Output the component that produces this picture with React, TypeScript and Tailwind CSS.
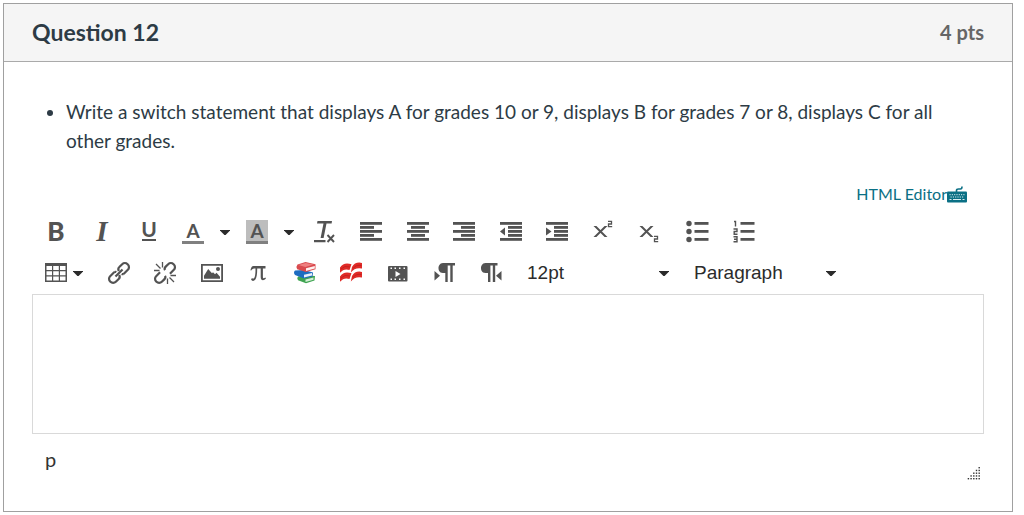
import { useState } from "react";
import type { ReactNode } from "react";

const INK = "#535353";

function Icon({ children }: { children: ReactNode }) {
  return (
    <svg width="22" height="22" viewBox="0 0 22 22" fill={INK} stroke="none" className="shrink-0 overflow-visible" aria-hidden="true">
      {children}
    </svg>
  );
}

function ToolButton({ label, children }: { label: string; children: ReactNode }) {
  return (
    <button type="button" aria-label={label} title={label} className="flex h-10 w-[46px] shrink-0 items-center justify-center">
      <Icon>{children}</Icon>
    </button>
  );
}

function Caret() {
  return (
    <svg width="10" height="5" viewBox="0 0 10 5" fill="#2b2b2b" className="shrink-0" aria-hidden="true">
      <path d="M0 0h10v.6L5.600 5H4.400L0 .6z" />
    </svg>
  );
}

function CaretButton({ label }: { label: string }) {
  return (
    <button type="button" aria-label={label} className="flex h-10 w-[18px] shrink-0 items-center justify-start pl-[3px]">
      <Caret />
    </button>
  );
}

function Bars({ rows }: { rows: [number, number][] }) {
  return (
    <>
      {rows.map(([x, w], i) => (
        <rect key={i} x={x} y={1 + i * 4} width={w} height="2.800" />
      ))}
    </>
  );
}

function ToolSelect({ label, options }: { label: string; options: string[] }) {
  return (
    <label className="relative flex h-10 w-[162px] shrink-0 items-center">
      <span className="sr-only">{label}</span>
      <select className="h-10 w-full appearance-none bg-transparent pl-[13px] pr-7 font-['Liberation_Sans',Arial,sans-serif] text-[19px] leading-6 text-[#2b2b2b] outline-none">
        {options.map((o) => (
          <option key={o}>{o}</option>
        ))}
      </select>
      <span className="pointer-events-none absolute right-[7px]">
        <Caret />
      </span>
    </label>
  );
}

const LATO = "Lato, sans-serif";
const SERIF = "'Liberation Serif', serif";

function FormatRow() {
  return (
    <div className="flex flex-wrap items-center gap-x-0.5" role="group" aria-label="Text formatting">
      <div className="flex">
        <ToolButton label="Bold">
          <text x="11" y="20" textAnchor="middle" fontFamily={LATO} fontSize="26" fontWeight="900">B</text>
        </ToolButton>
        <ToolButton label="Italic">
          <text x="11" y="20" textAnchor="middle" fontFamily={SERIF} fontSize="29" fontWeight="700" fontStyle="italic">I</text>
        </ToolButton>
        <ToolButton label="Underline">
          <text x="12" y="16" textAnchor="middle" fontFamily={LATO} fontSize="21" fontWeight="700">U</text>
          <rect x="5" y="18" width="14" height="2" />
        </ToolButton>
        <ToolButton label="Text color">
          <text x="10" y="17" textAnchor="middle" fontFamily={LATO} fontSize="19" fontWeight="700">A</text>
          <rect x="-1" y="20" width="22" height="3" fill="#808080" />
        </ToolButton>
        <CaretButton label="Choose text color" />
        <ToolButton label="Background color">
          <rect x="-1" y="-1" width="22" height="22" fill="#bdbdbd" />
          <text x="10" y="17" textAnchor="middle" fontFamily={LATO} fontSize="19" fontWeight="700">A</text>
          <rect x="-1" y="20" width="22" height="3" fill="#808080" />
        </ToolButton>
        <CaretButton label="Choose background color" />
      </div>
      <ToolButton label="Clear formatting">
        <path d="M4.500 0H19l-.4 2.500H4zM10.600 2H13.600L10.600 17H7.600zM1 19h11.500v2.200H1z" />
        <path d="M14.500 14l6.500 7M21 14l-6.500 7" stroke={INK} strokeWidth="1.900" fill="none" />
      </ToolButton>
      <div className="flex">
        <ToolButton label="Align left">
          <Bars rows={[[-1, 22], [-1, 14], [-1, 22], [-1, 14], [-1, 22]]} />
        </ToolButton>
        <ToolButton label="Align center">
          <Bars rows={[[0, 22], [4, 14], [0, 22], [4, 14], [0, 22]]} />
        </ToolButton>
        <ToolButton label="Align right">
          <Bars rows={[[0, 22], [8, 14], [0, 22], [8, 14], [0, 22]]} />
        </ToolButton>
        <ToolButton label="Outdent">
          <g transform="translate(1 0)">
            <Bars rows={[[0, 22], [8, 14], [8, 14], [8, 14], [0, 22]]} />
            <path d="M0 10.500L5 6.500v8z" />
          </g>
        </ToolButton>
        <ToolButton label="Indent">
          <g transform="translate(1 0)">
            <Bars rows={[[0, 22], [8, 14], [8, 14], [8, 14], [0, 22]]} />
            <path d="M5.500 10.500L0 6.500v8z" />
          </g>
        </ToolButton>
      </div>
      <div className="flex">
        <ToolButton label="Superscript">
          <path d="M.500 5h2.900L14.500 16h-2.900zM11.600 5h2.900L3.400 16H.500z" />
          <path d="M15 .300h3.500v2.700h-3v2.700h3.700" stroke={INK} strokeWidth="1.300" fill="none" />
        </ToolButton>
        <ToolButton label="Subscript">
          <path d="M.500 5h2.900L14.500 16h-2.900zM11.600 5h2.900L3.400 16H.500z" />
          <path d="M15 15.300h3.500V18h-3v2.700h3.700" stroke={INK} strokeWidth="1.300" fill="none" />
        </ToolButton>
      </div>
      <div className="flex">
        <ToolButton label="Bulleted list">
          {[2.5, 10.5, 18.5].map((y) => (
            <g key={y}>
              <circle cx="2" cy={y} r="2.700" />
              <rect x="7.500" y={y - 1.5} width="14" height="2.800" />
            </g>
          ))}
        </ToolButton>
        <ToolButton label="Numbered list">
          <path d="M1 .500h1.500v5M.500 8h3.500v2.500H1.200v2.700h3.300M.500 15.700h3.500v5H.500M1 18.200h3" stroke={INK} strokeWidth="1.400" fill="none" />
          <path d="M7.500 1h14v2.800h-14zM7.500 9h14v2.800h-14zM7.500 17h14v2.800h-14z" />
        </ToolButton>
      </div>
    </div>
  );
}

function InsertRow() {
  return (
    <div className="flex flex-wrap items-center gap-x-0.5" role="group" aria-label="Insert">
      <div className="flex">
        <button type="button" aria-label="Table" title="Table" className="flex h-10 w-[63px] shrink-0 items-center gap-1.5 pl-3">
          <Icon>
            <path fillRule="evenodd" d="M0 1h22v19H0zM1.500 4v4H7V4zM8.200 4v4h5.600V4zM15 4v4h5.500V4zM1.500 9.200v4H7v-4zM8.200 9.200v4h5.600v-4zM15 9.200v4h5.500v-4zM1.500 14.500v4H7v-4zM8.200 14.500v4h5.600v-4zM15 14.500v4h5.500v-4z" />
          </Icon>
          <Caret />
        </button>
        <ToolButton label="Insert link">
          <g transform="rotate(-45 11 11)" fill="none" stroke={INK} strokeWidth="2.200">
            <path d="M8.500 7H2.500A3.800 3.800 0 0 0-1.300 10.800v.4A3.800 3.800 0 0 0 2.500 15h3.700A3.500 3.500 0 0 0 9.800 12.500M13.500 15h6A3.800 3.800 0 0 0 23.300 11.200v-.4A3.800 3.800 0 0 0 19.500 7h-3.700A3.500 3.500 0 0 0 12.200 9.500M8.500 7.200q1 .4 1.300 1.300M13.500 14.800q-1-.4-1.300-1.300M6 11h10" />
          </g>
        </ToolButton>
        <ToolButton label="Remove link">
          <g transform="rotate(-45 11 11)" fill="none" stroke={INK} strokeWidth="2.200">
            <path d="M8 7H2.500A3.800 3.800 0 0 0-1.300 10.800v.4A3.800 3.800 0 0 0 2.500 15h3.500q2.500 0 3-2M14 15h5.500A3.800 3.800 0 0 0 23.300 11.200v-.4A3.800 3.800 0 0 0 19.500 7h-3.500q-2.500 0-3 2" />
          </g>
          <path d="M8.500 0v5.500M2 2l4.500 4.500M0 8.500h5.500M13.500 16.500V22M15.500 15.500L20 20M16.500 13.500H22" fill="none" stroke={INK} strokeWidth="1.300" />
        </ToolButton>
      </div>
      <div className="flex">
        <ToolButton label="Insert image">
          <path fillRule="evenodd" d="M-1 2h22v18H-1zM.800 3.800v14.400h18.400V3.800z" />
          <path d="M2 16.800v-3L6.200 7l3.800 4.300 1-1 2 2 1.500-1.500 3.500 4v2z" />
          <circle cx="16" cy="7" r="2" />
        </ToolButton>
        <ToolButton label="Insert math equation">
          <path d="M3.500 3h12v2.400h-2.600v8.300c0 2 1.200 2 2.300.8l.8.7c-2.500 3.300-5.300 2.200-5.300-1.300V5.400H7.200c0 5.700-.5 9.300-2 11.400-1.500 1.900-4.400 1.100-4-.8.500-1.500 1.700-.4 2.500-.5C5.200 14.500 5.500 10 5.500 5.400 3 5.400 2.200 5.800 1.200 7.500L.4 7.200C1.200 4.500 1.800 3 3.500 3z" transform="translate(2 1)" />
        </ToolButton>
        <ToolButton label="Course resources">
          <path d="M4 14.500l8-1 9 .5-.5 4.500-8.500 2.700-8-2.900q-1.500-2 0-3.800z" fill="#3fa451" />
          <path d="M11.500 17.500l8-2v2.200l-8 2.300z" fill="#d5efd8" />
          <path d="M1 8.500L10 8l9 2.500-.5 4-8.500 2L1 13q-2-2.500 0-4.500z" fill="#1d6cc0" />
          <path d="M10 12.800l8-1.800v2.500L10 15.500z" fill="#e7effb" />
          <path d="M3.500 2.500L11.500 0l10 2.300v5L12 10 3.200 7.200q-1.500-2.700.3-4.700z" fill="#d94a4e" />
          <path d="M4.500 2.900L11.600 1l8 1.500-8.200 2.500z" fill="#ee8080" />
          <path d="M12 6.200l8.800-2.200v2.500L12 9z" fill="#fff0ee" />
        </ToolButton>
        <ToolButton label="Publisher content">
          <g fill="#e02a27">
            <path d="M0 5.500Q4-.5 11.500 2.300L9.500 8Q4 6 0 10.800zM12 5Q15-.500 22 .900V6.500Q15 5 10.800 10.500z" />
            <path d="M0 14.500Q4 8.500 11.500 11.300L9.500 17Q4 15 0 19.800zM12 14Q15 8.500 22 9.900V15.500Q15 14 10.800 19.500z" />
          </g>
          <path d="M1 7Q4.500 3 10 5M13 6.500Q16 2.500 21.500 3.500M1 16Q4.500 12 10 14M13 15.500Q16 11.500 21.500 12.500" fill="none" stroke="#c3201f" strokeWidth="1" />
        </ToolButton>
        <ToolButton label="Record or upload media">
          <rect x="2" y="4" width="19.500" height="15.500" rx="1" />
          <path d="M4.500 5.500h1.500V7H4.500zM8.500 5.500h1.500V7H8.500zM13 5.500h1.500V7H13zM17.500 5.500H19V7h-1.500zM4.500 16.500h1.500V18H4.500zM8.500 16.500h1.500V18H8.500zM13 16.500h1.500V18H13zM17.500 16.500H19V18h-1.500zM9.500 9l5 3-5 3z" fill="#fff" />
        </ToolButton>
      </div>
      <div className="flex">
        <ToolButton label="Left to right">
          <path d="M.500 9v9.500L6 13.800zM9 1h12v2.500h-2.300V20h-2.400V3.500h-2.600V20h-2.400V11H9C5 11 4.500 7.500 4.500 6S5.500 1 9 1z" />
        </ToolButton>
        <ToolButton label="Right to left">
          <path d="M21.500 9v9.500L16 13.800zM5.500 1h12v2.500h-2.300V20h-2.400V3.500h-2.400V20H8V11H5.500C1.500 11 1 7.500 1 6s1-5 4.500-5z" />
        </ToolButton>
        <div className="flex gap-[5px]">
          <ToolSelect label="Font size" options={["12pt", "8pt", "10pt", "14pt", "18pt", "24pt", "36pt"]} />
          <ToolSelect label="Block format" options={["Paragraph", "Heading 2", "Heading 3", "Heading 4", "Preformatted"]} />
        </div>
      </div>
    </div>
  );
}

function KeyboardIcon() {
  return (
    <svg width="20" height="17" viewBox="0 0 20 17" fill="none" aria-hidden="true">
      <rect x="0" y="5.500" width="20" height="11" rx="1" fill="#0b7085" />
      <path d="M9.500 6V4.500Q9.500 3 11.500 3h2Q15 3 15 .5" stroke="#0b7085" strokeWidth="1.600" />
      <path d="M2.500 8.700h15M3.500 11h13" stroke="#d8edf0" strokeWidth="1" strokeDasharray="1.200 1.100" />
      <path d="M2.500 13.500h2M6 13.500h8M15.500 13.500h2" stroke="#d8edf0" strokeWidth="1" />
    </svg>
  );
}

function ResizeGrip() {
  return (
    <svg width="13" height="13" viewBox="0 0 13 13" fill="#333" aria-hidden="true">
      {[0, 1, 2, 3, 4].flatMap((row) =>
        Array.from({ length: row + 1 }, (_, i) => (
          <rect key={`${row}-${i}`} x={11.5 - i * 2.7} y={row * 2.75} width="1.400" height="1.400" />
        ))
      )}
    </svg>
  );
}

export default function App() {
  const [answer, setAnswer] = useState("");
  return (
    <main className="bg-white pb-[3px] pl-[3px] pr-[11px] pt-[3px] font-[Lato,sans-serif] text-[#2d3b45]">
      <section className="border border-[#a0a0a0]" aria-labelledby="question-title">
        <header className="flex h-[58px] items-center justify-between border-b border-[#aaaaaa] bg-[#f5f5f5] px-7 pb-px font-bold">
          <h2 id="question-title" className="text-[23px]">Question 12</h2>
          <span className="text-xl text-[#666666]">4 pts</span>
        </header>
        <div className="px-7 pb-[27px] pt-[35px]">
          <ul className="list-disc pl-[34px] pr-8 text-[19px] leading-[29px]">
            <li>
              Write a switch statement that displays A for grades 10 or 9, displays B for grades 7 or 8, displays C for all
              other grades.
            </li>
          </ul>
          <div className="mt-[27px] flex h-6 items-center justify-end pr-[17px] text-base text-[#0b7085]">
            <a href="#html-editor" className="flex items-center">
              HTML Editor
              <KeyboardIcon />
            </a>
          </div>
          <div className="flex flex-col gap-px pb-px pl-px pt-1.5" role="toolbar" aria-label="Editor toolbar">
            <FormatRow />
            <InsertRow />
          </div>
          <textarea
            aria-label="Answer"
            value={answer}
            onChange={(e) => setAnswer(e.target.value)}
            className="block h-[140px] w-full resize-none border border-[#d9d9d9] p-3 text-[19px] outline-none"
          />
          <div className="flex h-[50px] items-end justify-between pl-[13px] pr-1">
            <span className="self-center text-xl text-[#333333]">p</span>
            <span className="pb-1">
              <ResizeGrip />
            </span>
          </div>
        </div>
      </section>
    </main>
  );
}
